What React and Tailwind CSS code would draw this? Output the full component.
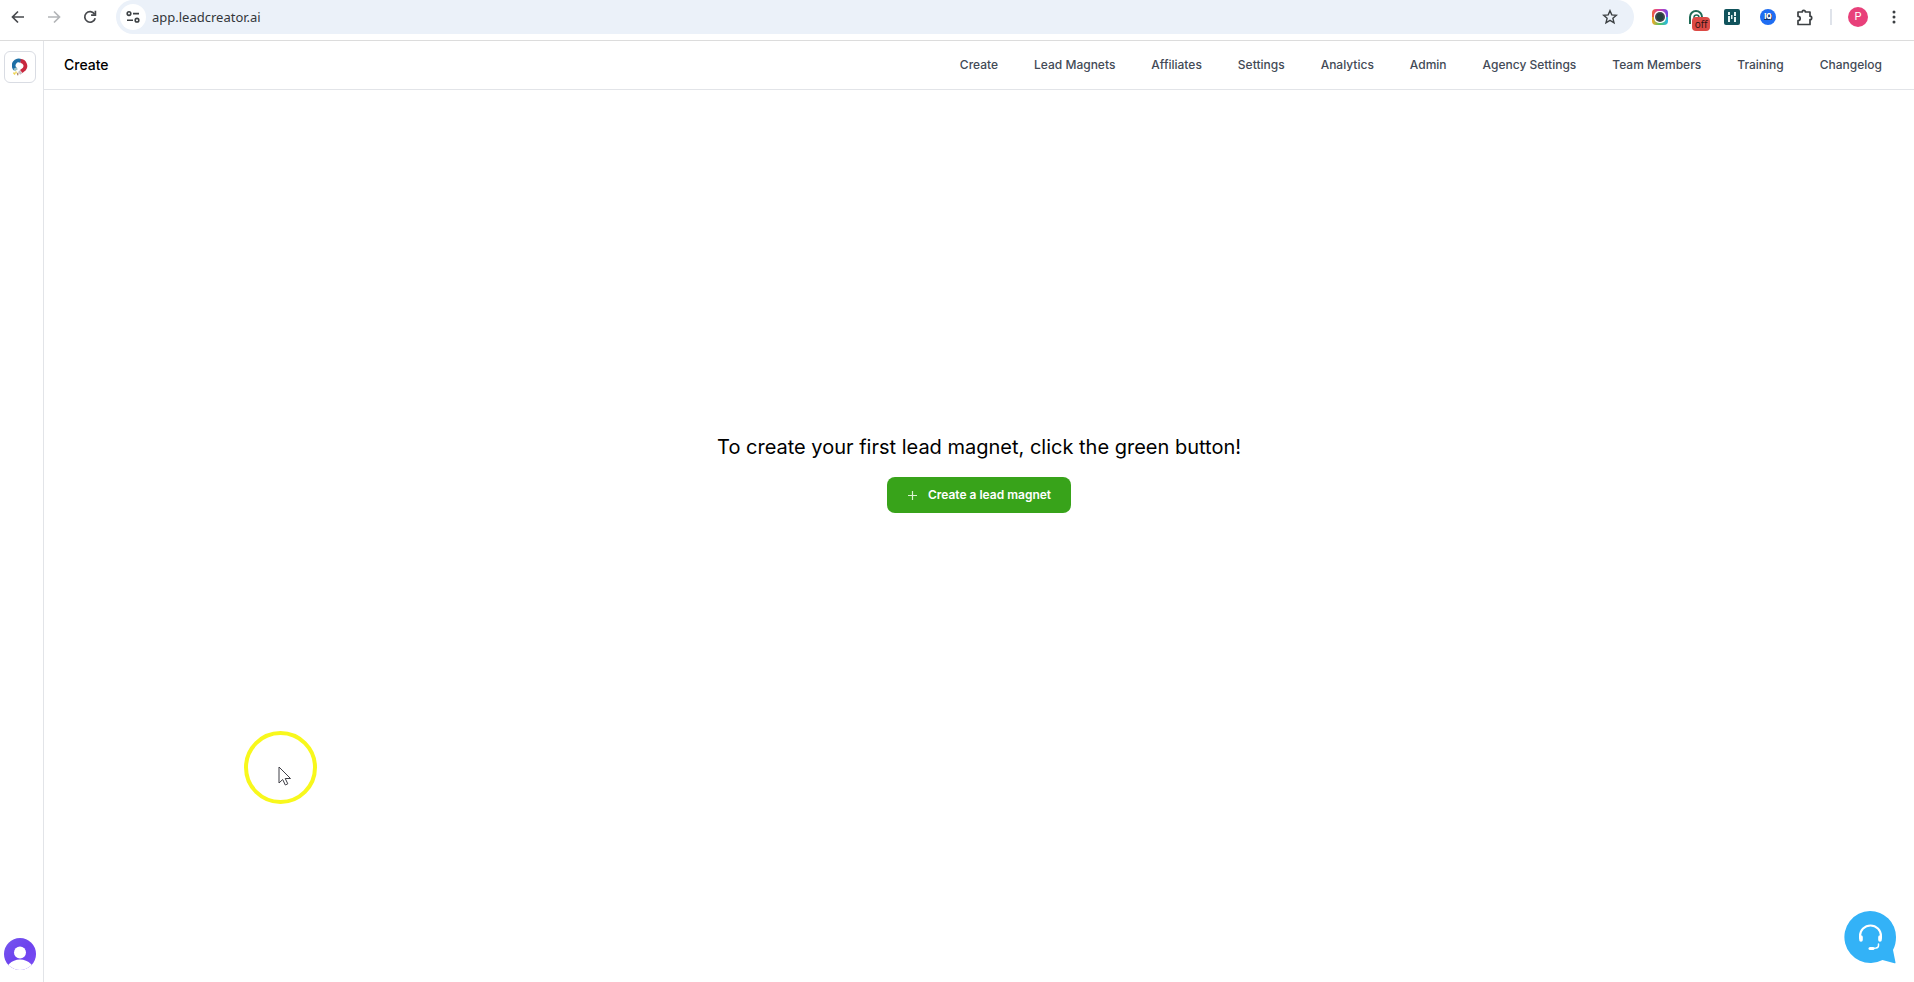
const navItems = [
  "Create",
  "Lead Magnets",
  "Affiliates",
  "Settings",
  "Analytics",
  "Admin",
  "Agency Settings",
  "Team Members",
  "Training",
  "Changelog",
];

function ToolbarButton({ label, children }) {
  return (
    <button type="button" aria-label={label} className="relative flex h-full w-9 shrink-0 items-center justify-center">
      {children}
    </button>
  );
}

function BackIcon() {
  return (
    <svg width="14" height="14" viewBox="0 0 14 14" fill="none" stroke="#47494d" strokeWidth="1.7">
      <path d="M13 7H2M7 1.5 1.5 7 7 12.5" />
    </svg>
  );
}

function ForwardIcon() {
  return (
    <svg width="14" height="14" viewBox="0 0 14 14" fill="none" stroke="#b3b5b8" strokeWidth="1.7">
      <path d="M1 7h11M7 1.5 12.5 7 7 12.5" />
    </svg>
  );
}

function ReloadIcon() {
  return (
    <svg width="14" height="14" viewBox="0 0 14 14" fill="none" stroke="#47494d" strokeWidth="1.7">
      <path d="M11.6 4.2A5.3 5.3 0 1 0 12.2 8.2" />
      <path d="M12.4.8v4.3H8.1" />
    </svg>
  );
}

function TuneIcon() {
  return (
    <svg width="14" height="14" viewBox="0 0 14 14" fill="none" stroke="#3c4043" strokeWidth="1.6">
      <circle cx="3" cy="3.6" r="1.8" />
      <path d="M7 3.6h6M1 10.2h6" />
      <circle cx="11" cy="10.2" r="1.8" />
    </svg>
  );
}

function StarIcon() {
  return (
    <svg width="16" height="16" viewBox="0 0 16 16" fill="none" stroke="#3c4043" strokeWidth="1.4">
      <path d="m8 1.7 1.8 4.2 4.6.4-3.5 3 1.1 4.5L8 11.4l-4 2.4 1.1-4.5-3.5-3 4.6-.4z" />
    </svg>
  );
}

function CameraExtension() {
  return (
    <svg width="16" height="16" viewBox="0 0 16 16">
      <defs>
        <linearGradient id="cam" x1="0" y1="0" x2="1" y2="0">
          <stop offset="0" stopColor="#f0623a" />
          <stop offset=".45" stopColor="#d840a8" />
          <stop offset="1" stopColor="#6a4be8" />
        </linearGradient>
        <linearGradient id="camLow" x1="0" y1="0" x2="1" y2="0">
          <stop offset="0" stopColor="#f5a623" />
          <stop offset=".5" stopColor="#4fc46a" />
          <stop offset="1" stopColor="#27b5e8" />
        </linearGradient>
      </defs>
      <path d="M0 8V4a4 4 0 0 1 4-4h8a4 4 0 0 1 4 4v4z" fill="url(#cam)" />
      <path d="M0 8v4a4 4 0 0 0 4 4h8a4 4 0 0 0 4-4V8z" fill="url(#camLow)" />
      <rect x="2" y="2" width="12" height="12" rx="5" fill="#fff" />
      <circle cx="8" cy="8" r="5" fill="#46484f" />
      <circle cx="8" cy="8" r="3.4" fill="#24423f" />
    </svg>
  );
}

function ArchExtension() {
  return (
    <svg width="16" height="16" viewBox="0 0 16 16" fill="none" stroke="#1f6b56" strokeWidth="2">
      <path d="M2 15V8a6 6 0 0 1 12 0v3" />
      <path d="M6 10V8.5a2.5 2.5 0 0 1 5 0" strokeWidth="1.5" />
    </svg>
  );
}

function BarsExtension() {
  return (
    <svg width="16" height="16" viewBox="0 0 16 16">
      <rect width="16" height="16" rx="2" fill="#10535c" />
      <g fill="#e4f2f2">
        <rect x="4" y="3" width="2" height="3" />
        <rect x="4" y="7" width="2" height="6" />
        <rect x="7" y="6" width="1.5" height="4" />
        <rect x="10" y="3" width="2" height="4" />
        <rect x="10" y="8" width="2" height="5" />
      </g>
    </svg>
  );
}

function PuzzleIcon() {
  return (
    <svg width="17" height="17" viewBox="0 0 17 17" fill="none" stroke="#3c4043" strokeWidth="1.7" strokeLinejoin="round">
      <path d="M2 3h4.2a1.6 1.6 0 0 1 3.2 0H14v4.2a1.7 1.7 0 0 1 0 3.4v4.9H2v-3.8a2.2 2.2 0 0 0 0-4.4z" />
    </svg>
  );
}

function DotsIcon() {
  return (
    <svg width="4" height="14" viewBox="0 0 4 14" fill="#3c4043">
      <circle cx="2" cy="2" r="1.5" />
      <circle cx="2" cy="7" r="1.5" />
      <circle cx="2" cy="12" r="1.5" />
    </svg>
  );
}

function BrowserBar() {
  return (
    <div className="flex h-[41px] items-start border-b border-[#dcdcdc] bg-white">
      <div className="flex h-[34px] flex-1 items-center pr-0.5">
        <ToolbarButton label="Back"><BackIcon /></ToolbarButton>
        <ToolbarButton label="Forward"><ForwardIcon /></ToolbarButton>
        <ToolbarButton label="Reload"><ReloadIcon /></ToolbarButton>
        <div className="mx-2 flex h-full flex-1 items-center rounded-full bg-[#ebf1f9] pl-1">
          <button type="button" aria-label="Site information" className="flex size-[26px] items-center justify-center rounded-full bg-white">
            <TuneIcon />
          </button>
          <input
            type="text"
            aria-label="Address"
            defaultValue="app.leadcreator.ai"
            className="ml-1.5 h-full min-w-0 flex-1 bg-transparent font-['Noto_Sans',sans-serif] text-[13px] text-[#33373b] outline-none"
          />
          <button type="button" aria-label="Bookmark this page" className="mr-4 flex size-4 items-center justify-center">
            <StarIcon />
          </button>
        </div>
        <ToolbarButton label="Camera extension"><CameraExtension /></ToolbarButton>
        <ToolbarButton label="Arch extension">
          <ArchExtension />
          <span className="absolute top-[17px] left-[14px] flex h-[14px] w-[18px] items-center justify-center rounded-sm bg-[#dc4a45] font-['Open_Sans',sans-serif] text-[10px] text-[#2a1010]">
            off
          </span>
        </ToolbarButton>
        <ToolbarButton label="Bars extension"><BarsExtension /></ToolbarButton>
        <ToolbarButton label="Search extension">
          <span className="flex size-4 items-center justify-center rounded-full bg-[#1f6df2] font-['Inter',sans-serif] text-[7px] font-black text-white">
            <span className="bg-[#0b2e66] leading-[6px]">IQ</span>
          </span>
        </ToolbarButton>
        <ToolbarButton label="Extensions"><PuzzleIcon /></ToolbarButton>
        <span className="mx-2 h-4 w-0.5 bg-[#dfe3ea]" />
        <ToolbarButton label="Profile">
          <span className="flex size-5 items-center justify-center rounded-full bg-[#e8407a] font-['Roboto',sans-serif] text-[11px] text-white">
            P
          </span>
        </ToolbarButton>
        <ToolbarButton label="Browser menu"><DotsIcon /></ToolbarButton>
      </div>
    </div>
  );
}

function MagnetLogo() {
  return (
    <svg width="16" height="18" viewBox="0 0 16 18" fill="none">
      <path d="M3.4 11.2A5 5 0 0 1 9 3" stroke="#1d6fa5" strokeWidth="3.8" />
      <path d="M8.500 3a5 5 0 0 1 3.700 8.200L9.200 13.600" stroke="#c9283e" strokeWidth="3.800" />
      <path d="m1.500 10.800 3-1.600 1.300 2-2.800 2z" fill="#9fc3c9" />
      <path d="m7.800 12.300 2.500 2.900-2.200 1.600-2-2.900z" fill="#c9bfc5" />
      <path d="M1.500 14.500 3 16.500M4 13.500v2" stroke="#efd34f" strokeWidth="1.500" />
      <path d="M5.800 14.800v2.500" stroke="#8a5a3c" />
    </svg>
  );
}

function UserAvatar() {
  return (
    <svg width="32" height="32" viewBox="0 0 32 32">
      <defs>
        <linearGradient id="avatar" x1="0" y1="0" x2="1" y2="1">
          <stop offset="0" stopColor="#7657ee" />
          <stop offset=".5" stopColor="#6d43ee" />
          <stop offset="1" stopColor="#7c4df5" />
        </linearGradient>
        <clipPath id="avatarClip">
          <circle cx="16" cy="16" r="16" />
        </clipPath>
      </defs>
      <g clipPath="url(#avatarClip)">
        <rect width="32" height="32" fill="url(#avatar)" />
        <circle cx="16" cy="14.5" r="6" fill="#fff" />
        <circle cx="16" cy="37" r="15.5" fill="#fff" />
      </g>
    </svg>
  );
}

function ChatBubble() {
  return (
    <svg width="54" height="54" viewBox="0 0 54 54">
      <path
        d="M26 0a26 26 0 0 1 26 26c0 5-1 9-3 13l2.500 12.500c.1.600-.4 1-1 .8L38.500 49A26 26 0 1 1 26 0z"
        fill="#33b2f7"
      />
      <g fill="none" stroke="#fff" strokeLinecap="round">
        <path d="M16 27v-2a10.500 10.500 0 0 1 21 0v2" strokeWidth="2" />
        <path d="M17 26v3M36 26v3" strokeWidth="3.6" />
        <path d="M34.500 33v1.500c0 1.500-1 2.300-2.500 2.500l-4 .4" strokeWidth="1.500" />
        <path d="M26 37.400h3" strokeWidth="3" />
      </g>
    </svg>
  );
}

function Sidebar() {
  return (
    <aside className="flex w-11 shrink-0 flex-col justify-between border-r border-[#e2e4e8] pt-2.5 pb-3 pl-1">
      <button type="button" aria-label="Workspace" className="flex size-8 items-center justify-center rounded-md border border-[#d9dce3]">
        <MagnetLogo />
      </button>
      <button type="button" aria-label="Account" className="size-8">
        <UserAvatar />
      </button>
    </aside>
  );
}

function Header() {
  return (
    <header className="flex h-[49px] items-center justify-between border-b border-[#e2e4e8] pr-8 pl-5">
      <h1 className="text-sm font-medium text-black">Create</h1>
      <nav className="flex gap-9">
        {navItems.map((item) => (
          <a key={item} href="#" className="text-xs font-medium text-[#434a56]">
            {item}
          </a>
        ))}
      </nav>
    </header>
  );
}

function Pointer() {
  return (
    <div className="pointer-events-none absolute top-[731px] left-[244px] size-[73px] rounded-full border-4 border-[#f8f81c]">
      <svg className="absolute top-[31px] left-[30px]" width="14" height="20" viewBox="0 0 14 20">
        <path
          d="M1 1v16l3.700-3.500 2.600 5.500 2.500-1.200-2.600-5.300H12.500z"
          fill="#fff"
          stroke="#3f3f46"
        />
      </svg>
    </div>
  );
}

export default function App() {
  return (
    <div className="relative flex min-h-screen flex-col bg-white font-['Inter',sans-serif]">
      <BrowserBar />
      <div className="flex flex-1">
        <Sidebar />
        <div className="flex min-w-0 flex-1 flex-col">
          <Header />
          <main className="flex flex-1 flex-col items-center justify-center gap-4 pb-[126px]">
            <p className="text-xl leading-7 text-black">
              To create your first lead magnet, click the green button!
            </p>
            <button type="button" className="flex h-9 items-center gap-2.5 rounded-lg bg-[#38a31a] px-5 text-xs font-semibold text-white">
              <svg width="11" height="11" viewBox="0 0 11 11" stroke="#d9f2d2" strokeWidth="1.2">
                <path d="M5.5 1v9M1 5.500h9" />
              </svg>
              Create a lead magnet
            </button>
          </main>
        </div>
      </div>
      <button type="button" aria-label="Open support chat" className="absolute right-4 bottom-[17px]">
        <ChatBubble />
      </button>
      <Pointer />
    </div>
  );
}
